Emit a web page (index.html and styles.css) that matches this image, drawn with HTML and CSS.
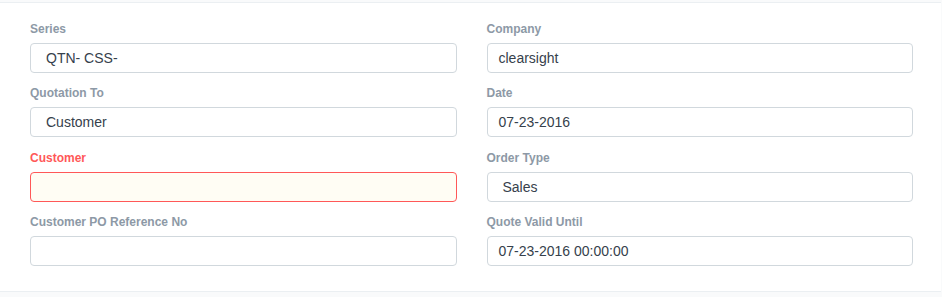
FILE: index.html
```html
<html lang="en">

<head>
    <meta charset="UTF-8">
    <meta name="viewport" content="width=device-width, initial-scale=1.0">
    <title>Quotation</title>
    <link rel="stylesheet" href="styles.css">
</head>

<body>
    <div class="form-section">
        <div class="form-grid">
            <div class="form-group">
                <label for="series">Series</label>
                <div class="control select">QTN- CSS-</div>
            </div>
            <div class="form-group">
                <label for="company">Company</label>
                <div class="control">clearsight</div>
            </div>

            <div class="form-group">
                <label>Quotation To</label>
                <div class="control select">Customer</div>
            </div>
            <div class="form-group">
                <label>Date</label>
                <div class="control">07-23-2016</div>
            </div>

            <div class="form-group has-error">
                <label>Customer</label>
                <div class="control"></div>
            </div>
            <div class="form-group">
                <label>Order Type</label>
                <div class="control select">Sales</div>
            </div>

            <div class="form-group">
                <label>Customer PO Reference No</label>
                <div class="control"></div>
            </div>
            <div class="form-group">
                <label>Quote Valid Until</label>
                <div class="control">07-23-2016 00:00:00</div>
            </div>
        </div>
    </div>
</body>

</html>
```

FILE: styles.css
```css
body {
    font-family: "Liberation Sans", Arial, Helvetica, sans-serif;
    margin: 0;
    background-color: #f9fafb;
}

.form-section {
    margin: 2px 1px 0 0;
    padding: 18px 28px 25px 30px;
    background-color: #fff;
    border-top: 1px solid #ebeff2;
    border-bottom: 1px solid #ebeff2;
}

.form-grid {
    display: grid;
    grid-template-columns: 1fr 1fr;
    column-gap: 30px;
    row-gap: 12.3px;
}

label {
    display: block;
    font-size: 12px;
    line-height: 16px;
    font-weight: 700;
    color: #8d99a6;
    margin-bottom: 6px;
}

.control {
    height: 30px;
    line-height: 28px;
    box-sizing: border-box;
    padding: 0 11px;
    border: 1px solid #d1d8dd;
    border-radius: 4px;
    font-size: 14px;
    color: #36414c;
    background-color: #fff;
    white-space: nowrap;
}

.control.select {
    padding-left: 15px;
}

.has-error label {
    color: #ff5858;
}

.has-error .control {
    border-color: #ff5858;
    background-color: #fffdf4;
}
```
